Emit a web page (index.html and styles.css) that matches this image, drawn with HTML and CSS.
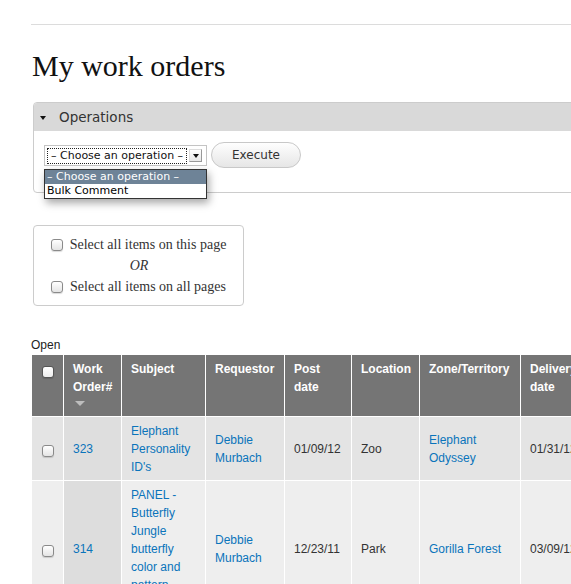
FILE: index.html
```html
<!DOCTYPE html>
<html>
<head>
<meta charset="utf-8">
<title>My work orders</title>
<link rel="stylesheet" href="styles.css">
</head>
<body>
<div class="page">
  <div class="topline"></div>
  <h1 class="title">My work orders</h1>

  <div class="fieldset">
    <div class="legend"><span class="tri"></span><span>Operations</span></div>
    <div class="fs-body">
      <div class="select-wrap">
        <div class="select">
          <span class="select-text">– Choose an operation –</span>
          <span class="select-btn"><span class="select-arrow"></span></span>
        </div>
        <div class="dropdown">
          <div class="opt opt-sel">– Choose an operation –</div>
          <div class="opt">Bulk Comment</div>
        </div>
      </div>
      <button class="btn">Execute</button>
    </div>
  </div>

  <div class="selall">
    <div class="selall-line"><span class="cb"></span>Select all items on this page</div>
    <div class="selall-or">OR</div>
    <div class="selall-line"><span class="cb"></span>Select all items on all pages</div>
  </div>

  <div class="caption">Open</div>
  <table class="grid">
    <thead>
      <tr>
        <th class="c-cb"><span class="cb cb-head"></span></th>
        <th class="c-wo">Work Order#<span class="sort-arrow"></span></th>
        <th class="c-subj">Subject</th>
        <th class="c-req">Requestor</th>
        <th class="c-post">Post date</th>
        <th class="c-loc">Location</th>
        <th class="c-zone">Zone/Territory</th>
        <th class="c-del">Delivery date</th>
      </tr>
    </thead>
    <tbody>
      <tr class="odd">
        <td class="c-cb"><span class="cb"></span></td>
        <td class="active"><a href="#">323</a></td>
        <td><a href="#">Elephant Personality ID's</a></td>
        <td><a href="#">Debbie Murbach</a></td>
        <td>01/09/12</td>
        <td>Zoo</td>
        <td><a href="#">Elephant Odyssey</a></td>
        <td>01/31/12</td>
      </tr>
      <tr class="even">
        <td class="c-cb"><span class="cb"></span></td>
        <td class="active"><a href="#">314</a></td>
        <td><a href="#">PANEL - Butterfly Jungle butterfly color and pattern chart</a></td>
        <td><a href="#">Debbie Murbach</a></td>
        <td>12/23/11</td>
        <td>Park</td>
        <td><a href="#">Gorilla Forest</a></td>
        <td>03/09/12</td>
      </tr>
    </tbody>
  </table>
</div>
</body>
</html>
```

FILE: styles.css
```css
html, body {
  margin: 0;
  padding: 0;
  overflow: hidden;
  background: #fff;
}
body {
  font-family: "Liberation Sans", Arial, sans-serif;
  color: #333;
}
.page {
  width: 700px;
  padding: 24px 0 0 31px;
}
.topline {
  height: 1px;
  background: #dcdcdc;
}
.title {
  margin: 23px 0 0 1px;
  font-family: "Liberation Serif", "Times New Roman", serif;
  font-weight: normal;
  font-size: 30px;
  line-height: 36px;
  color: #111;
}

/* Operations fieldset */
.fieldset {
  margin: 18px 0 0 2px;
  border: 1px solid #ccc;
  border-radius: 4px;
}
.legend {
  height: 28px;
  background: #d9d9d9;
  display: flex;
  align-items: center;
  font-family: "DejaVu Sans", Verdana, sans-serif;
  font-size: 13.5px;
  color: #333;
  border-radius: 3px 3px 0 0;
}
.tri {
  width: 0;
  height: 0;
  border-left: 3.5px solid transparent;
  border-right: 3.5px solid transparent;
  border-top: 4px solid #111;
  margin: 1px 13px 0 6px;
}
.fs-body {
  display: flex;
  align-items: center;
  padding: 11px 10px 24px;
}
.select-wrap {
  position: relative;
  margin-top: 1px;
}
.select {
  width: 163px;
  height: 21px;
  box-sizing: border-box;
  border: 1px solid #c4c4c4;
  background: #fff;
  display: flex;
  align-items: center;
  padding: 0 4px 0 2px;
  font-family: "DejaVu Sans", Verdana, sans-serif;
  font-size: 11px;
  color: #111;
}
.select-text {
  flex: 1;
  border: 1px dotted #222;
  height: 14px;
  line-height: 14px;
  padding-left: 3px;
  white-space: nowrap;
  overflow: hidden;
}
.select-btn {
  width: 13px;
  height: 13px;
  margin-left: 2px;
  box-sizing: border-box;
  border: 1px solid #999;
  border-top-color: #ddd;
  border-left-color: #ddd;
  background: linear-gradient(#fff, #e8e8e8);
  display: flex;
  align-items: center;
  justify-content: center;
}
.select-arrow {
  width: 0;
  height: 0;
  border-left: 3px solid transparent;
  border-right: 3px solid transparent;
  border-top: 4px solid #111;
}
.dropdown {
  position: absolute;
  left: 0;
  top: 24px;
  width: 163px;
  box-sizing: border-box;
  border: 1px solid #333;
  background: #fff;
  box-shadow: 2px 4px 8px rgba(0, 0, 0, 0.35);
  font-family: "DejaVu Sans", Verdana, sans-serif;
  font-size: 11px;
  color: #000;
  z-index: 2;
}
.opt {
  height: 14px;
  line-height: 14px;
  padding-left: 2px;
  white-space: nowrap;
}
.opt-sel {
  background: #6e8397;
  color: #fff;
}
.btn {
  margin-left: 4px;
  width: 90px;
  height: 26px;
  border: 1px solid #c8c8c8;
  border-radius: 13px;
  background: linear-gradient(#fefefe, #e6e6e6);
  font-family: "DejaVu Sans", Verdana, sans-serif;
  font-size: 12px;
  color: #333;
  padding: 0;
}

/* Select all box */
.selall {
  margin: 32px 0 0 2px;
  width: 211px;
  box-sizing: border-box;
  border: 1px solid #ccc;
  border-radius: 4px;
  padding: 8px 0;
  text-align: center;
  font-family: "Liberation Serif", "Times New Roman", serif;
  font-size: 14px;
  line-height: 21px;
  color: #333;
}
.selall-line {
  display: flex;
  align-items: center;
  justify-content: center;
}
.selall-line .cb {
  margin-right: 7px;
  width: 12px;
  height: 12px;
}
.selall-or {
  font-style: italic;
  padding-left: 1px;
}

.cb {
  display: inline-block;
  width: 11px;
  height: 11px;
  box-sizing: border-box;
  border: 1px solid #8a8a8a;
  border-radius: 3px;
  background: linear-gradient(#ffffff, #e4e4e4);
  box-shadow: 0 1px 1px rgba(0, 0, 0, 0.15);
  vertical-align: middle;
}

/* Table */
.caption {
  margin-top: 32px;
  font-size: 12px;
  line-height: 14px;
  color: #222;
  margin-bottom: 3px;
}
.grid {
  margin-left: 1px;
  border-collapse: separate;
  border-spacing: 0;
  table-layout: fixed;
  width: 568px;
  font-size: 12px;
  line-height: 18px;
}
.grid th, .grid td {
  box-sizing: border-box;
  border-left: 1px solid #fff;
  padding: 5px 9px 4px;
  text-align: left;
  overflow: hidden;
}
.grid th.c-cb, .grid td.c-cb {
  border-left: 0;
  padding: 0;
  text-align: center;
}
.grid th {
  background: #757575;
  color: #fff;
  font-weight: bold;
  vertical-align: top;
  padding: 5px 9px 10px;
  height: 61px;
}
.grid th.c-cb { padding-top: 11px; }
.grid td {
  border-top: 1px solid #fff;
  vertical-align: middle;
  color: #333;
}
.c-cb { width: 31px; }
.c-wo { width: 58px; }
.c-subj { width: 84px; }
.c-req { width: 79px; }
.c-post { width: 67px; }
.c-loc { width: 68px; }
.c-zone { width: 101px; }
.c-del { width: 80px; }
.grid td .cb, .grid th .cb {
  width: 12px;
  height: 12px;
}
.grid th .cb {
  display: block;
  margin: 0 auto;
}
.grid td .cb {
  margin-top: 3px;
}
.cb-head {
  background: linear-gradient(#ffffff, #ececec);
  border-color: #555;
}
.sort-arrow {
  display: block;
  width: 0;
  height: 0;
  margin: 5px 0 0 2px;
  border-left: 5px solid transparent;
  border-right: 5px solid transparent;
  border-top: 5px solid #bdbdbd;
}
tr.odd td { background: #e4e4e4; }
tr.even td { background: #eeeeee; }
tr td.active { background: #dddddd; }
tr.odd td.active { background: #dedede; }
.grid a {
  color: #0a74bb;
  text-decoration: none;
}
```
